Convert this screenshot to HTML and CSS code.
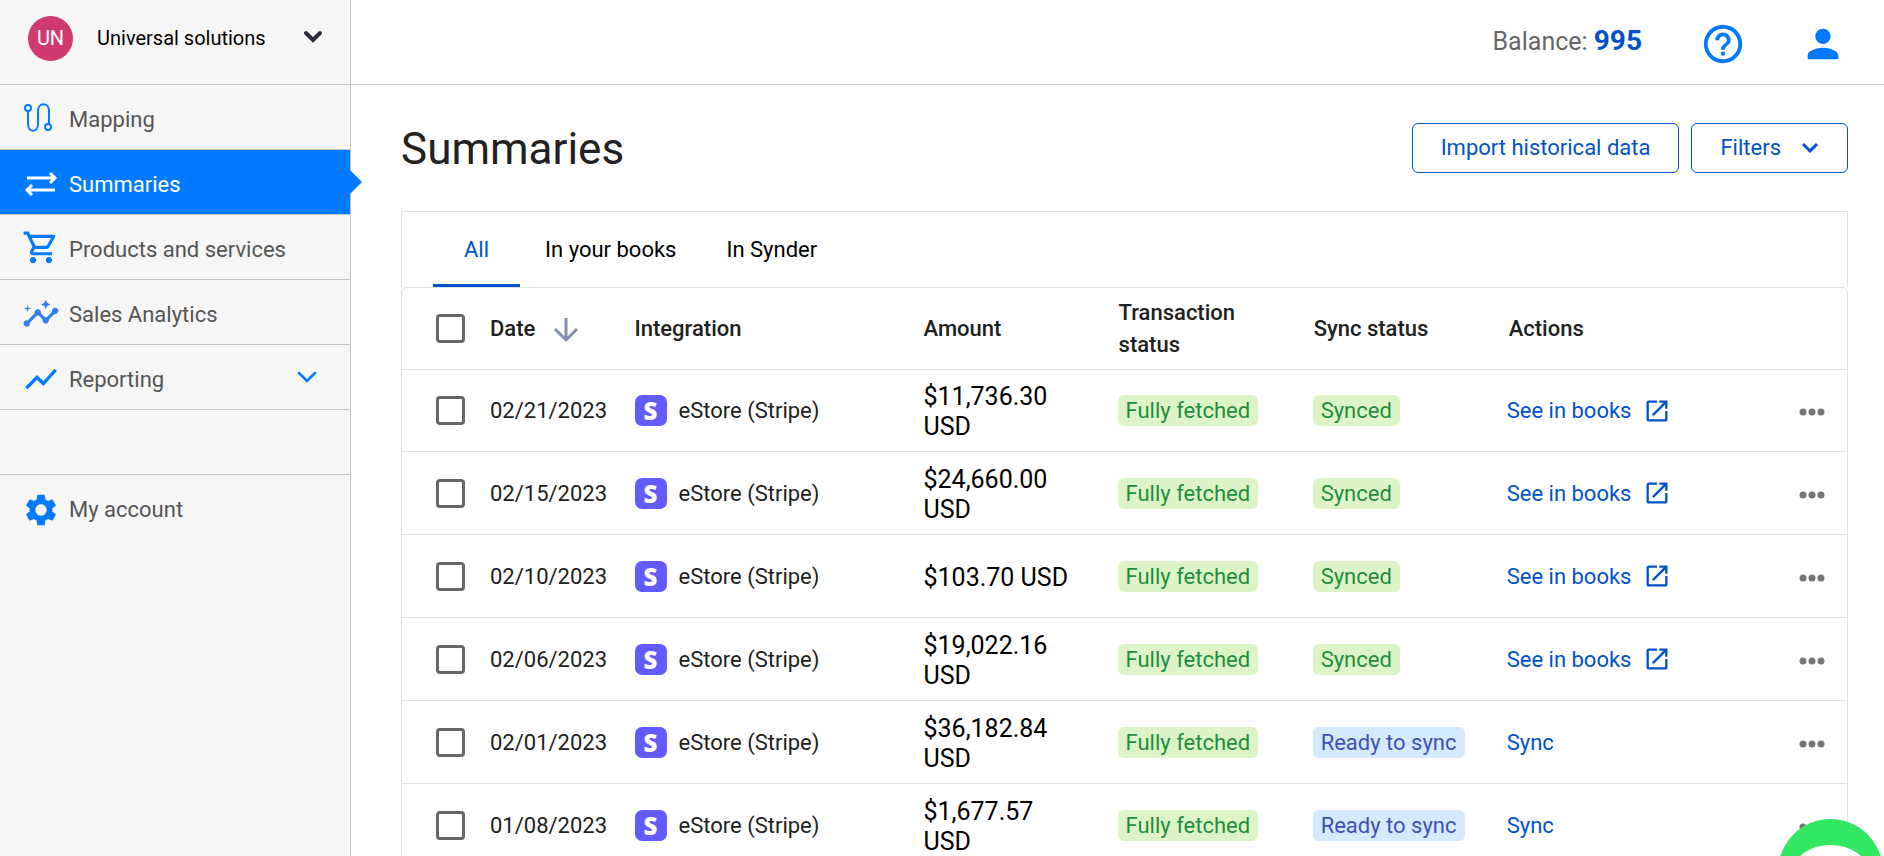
FILE: index.html
```html
<!DOCTYPE html>
<html lang="en">
<head>
    <meta charset="UTF-8">
    <meta name="viewport" content="width=device-width, initial-scale=1.0">
    <title>Summaries</title>
    <link rel="stylesheet" href="styles.css">
</head>
<body>

    <aside class="sidebar">
        <button class="company" type="button">
            <span class="avatar">UN</span>
            <span class="company-name">Universal solutions</span>
            <svg class="company-arrow" width="20" height="20" viewBox="0 0 20 20"><path d="M3 5l7 7 7-7" fill="none" stroke="#2b2b3a" stroke-width="4" stroke-linecap="round"/></svg>
        </button>
        <nav class="menu">
            <a href="#" class="menu-item">
                <svg width="38" height="38" viewBox="0 0 38 38" fill="none" stroke="#007bff" stroke-width="2"><circle cx="6" cy="8" r="3"/><circle cx="26" cy="27" r="3"/><path d="M6 11v13c0 9 10 9 10 0V11c0-9 11-9 11 0v13"/></svg>
                <span>Mapping</span>
            </a>
            <a href="#" class="menu-item active">
                <svg width="38" height="38" viewBox="0 0 38 38" fill="none" stroke="#fff" stroke-width="3"><path d="M5 13h27M28 8l5 5-5 5M33 25H6M10 20l-5 5 5 5"/></svg>
                <span>Summaries</span>
            </a>
            <a href="#" class="menu-item">
                <svg width="38" height="38" viewBox="0 1 24 24" fill="#007bff"><path d="M15.55 13c.75 0 1.41-.41 1.75-1.03l3.58-6.49c.37-.66-.11-1.48-.87-1.48H5.21l-.94-2H1v2h2l3.6 7.59-1.35 2.44C4.52 15.37 5.48 17 7 17h12v-2H7l1.1-2h7.45zM6.16 6h12.15l-2.76 5H8.53L6.16 6zM7 18c-1.1 0-1.99.9-1.99 2S5.9 22 7 22s2-.9 2-2-.9-2-2-2zm10 0c-1.1 0-1.99.9-1.99 2s.89 2 1.99 2 2-.9 2-2-.9-2-2-2z"/></svg>
                <span>Products and services</span>
            </a>
            <a href="#" class="menu-item">
                <svg width="38" height="38" viewBox="0 0 24 24" fill="#2f80ed"><path d="M21 8c-1.45 0-2.26 1.44-1.93 2.51l-3.55 3.56c-.3-.09-.74-.09-1.04 0l-2.55-2.55C12.27 10.45 11.46 9 10 9c-1.45 0-2.27 1.44-1.93 2.52l-4.56 4.55C2.44 15.74 1 16.55 1 18c0 1.1.9 2 2 2 1.45 0 2.26-1.44 1.93-2.51l4.55-4.56c.3.09.74.09 1.04 0l2.55 2.55C12.73 16.55 13.54 18 15 18c1.45 0 2.27-1.44 1.93-2.52l3.56-3.55C21.56 12.26 23 11.45 23 10c0-1.1-.9-2-2-2z"/><path d="M15 9l.94-2.07L18 6l-2.06-.93L15 3l-.92 2.07L12 6l2.08.93zM3.5 11l.5-2 2-.5-2-.5-.5-2-.5 2-2 .5 2 .5z"/></svg>
                <span>Sales Analytics</span>
            </a>
            <a href="#" class="menu-item">
                <svg width="38" height="38" viewBox="0 0 24 24" fill="#007bff"><path d="M3.5 18.49l6-6.01 4 4L22 6.92l-1.41-1.41-7.09 7.97-4-4L2 16.99z"/></svg>
                <span>Reporting</span>
                <svg class="menu-arrow" width="20" height="16" viewBox="0 0 20 16"><path d="M2 2l8 8 8-8" fill="none" stroke="#007bff" stroke-width="2.5" stroke-linecap="round"/></svg>
            </a>
            <div class="menu-space"></div>
            <a href="#" class="menu-item last">
                <svg width="38" height="38" viewBox="0 0 24 24" fill="#007bff"><path d="M19.14 12.94c.04-.3.06-.61.06-.94 0-.32-.02-.64-.07-.94l2.03-1.58c.18-.14.23-.41.12-.61l-1.92-3.32c-.12-.22-.37-.29-.59-.22l-2.39.96c-.5-.38-1.03-.7-1.62-.94l-.36-2.54c-.04-.24-.24-.41-.48-.41h-3.84c-.24 0-.43.17-.47.41l-.36 2.54c-.59.24-1.13.57-1.62.94l-2.39-.96c-.22-.08-.47 0-.59.22L2.74 8.87c-.12.21-.08.47.12.61l2.03 1.58c-.05.3-.09.63-.09.94s.02.64.07.94l-2.03 1.58c-.18.14-.23.41-.12.61l1.92 3.32c.12.22.37.29.59.22l2.39-.96c.5.38 1.03.7 1.62.94l.36 2.54c.05.24.24.41.48.41h3.84c.24 0 .44-.17.47-.41l.36-2.54c.59-.24 1.13-.56 1.62-.94l2.39.96c.22.08.47 0 .59-.22l1.92-3.32c.12-.22.07-.47-.12-.61l-2.01-1.58zM12 15.6c-1.98 0-3.6-1.62-3.6-3.6s1.62-3.6 3.6-3.6 3.6 1.62 3.6 3.6-1.62 3.6-3.6 3.6z"/></svg>
                <span>My account</span>
            </a>
        </nav>
    </aside>

    <div class="page">
        <header class="topbar">
            <div class="balance">Balance: <b>995</b></div>
            <button class="icon-btn" type="button" aria-label="Help">
                <svg width="46" height="46" viewBox="0 0 24 24" fill="#007bff"><path d="M11 18h2v-2h-2v2zm1-16C6.48 2 2 6.48 2 12s4.48 10 10 10 10-4.48 10-10S17.52 2 12 2zm0 18c-4.41 0-8-3.59-8-8s3.59-8 8-8 8 3.59 8 8-3.59 8-8 8zm0-14c-2.21 0-4 1.79-4 4h2c0-1.1.9-2 2-2s2 .9 2 2c0 2-3 1.75-3 5h2c0-2.25 3-2.5 3-5 0-2.21-1.79-4-4-4z"/></svg>
            </button>
            <button class="icon-btn" type="button" aria-label="Profile">
                <svg width="46" height="46" viewBox="0 0 24 24" fill="#007bff"><path d="M12 12c2.21 0 4-1.79 4-4s-1.79-4-4-4-4 1.79-4 4 1.79 4 4 4zm0 2c-2.67 0-8 1.34-8 4v2h16v-2c0-2.66-5.33-4-8-4z"/></svg>
            </button>
        </header>

        <main class="content">
            <div class="heading">
                <h1>Summaries</h1>
                <button class="btn" type="button">Import historical data</button>
                <button class="btn" type="button">Filters
                    <svg width="18" height="12" viewBox="0 0 18 12"><path d="M2 3l7 7 7-7" fill="none" stroke="#0052cc" stroke-width="3"/></svg>
                </button>
            </div>

            <div class="tabs">
                <button class="tab selected" type="button">All</button>
                <button class="tab" type="button">In your books</button>
                <button class="tab" type="button">In Synder</button>
            </div>

            <div class="table-box">
                <table>
                    <thead>
                        <tr>
                            <th class="col-check"><input type="checkbox" aria-label="Select all"></th>
                            <th class="col-date">Date <svg class="sort" width="26" height="26" viewBox="0 0 26 26"><path d="M13 1v22M2 12l11 11 11-11" fill="none" stroke="#8490ab" stroke-width="3"/></svg></th>
                            <th class="col-integration">Integration</th>
                            <th class="col-status">Amount</th>
                            <th class="col-status">Transaction status</th>
                            <th class="col-status">Sync status</th>
                            <th>Actions</th>
                            <th class="col-more"></th>
                        </tr>
                    </thead>
                    <tbody id="rows"></tbody>
                </table>
            </div>
        </main>
    </div>

    <button class="chat" type="button" aria-label="Chat"></button>

    <script>
        const summaries = [
            { date: '02/21/2023', amount: '$11,736.30', synced: true },
            { date: '02/15/2023', amount: '$24,660.00', synced: true },
            { date: '02/10/2023', amount: '$103.70', synced: true },
            { date: '02/06/2023', amount: '$19,022.16', synced: true },
            { date: '02/01/2023', amount: '$36,182.84', synced: false },
            { date: '01/08/2023', amount: '$1,677.57', synced: false }
        ];

        const openIcon = '<svg width="28" height="28" viewBox="0 0 24 24" fill="#0052cc"><path d="M19 19H5V5h7V3H5c-1.11 0-2 .9-2 2v14c0 1.1.89 2 2 2h14c1.1 0 2-.9 2-2v-7h-2v7zM14 3v2h3.59l-9.83 9.83 1.41 1.41L19 6.41V10h2V3h-7z"/></svg>';

        document.getElementById('rows').innerHTML = summaries.map(function(row) {
            const status = row.synced ? '<span class="tag green">Synced</span>' : '<span class="tag blue">Ready to sync</span>';
            const action = row.synced ? `<a href="#" class="action">See in books ${openIcon}</a>` : '<a href="#" class="action">Sync</a>';

            return `<tr>
                <td class="col-check"><input type="checkbox" aria-label="Select ${row.date}"></td>
                <td>${row.date}</td>
                <td><div class="integration"><span class="stripe">S</span>eStore (Stripe)</div></td>
                <td class="amount">${row.amount} USD</td>
                <td><span class="tag green">Fully fetched</span></td>
                <td>${status}</td>
                <td>${action}</td>
                <td class="col-more"><button class="more" type="button" aria-label="More"><svg width="26" height="8" viewBox="0 0 26 8" fill="#757575"><circle cx="4" cy="4" r="3.5"/><circle cx="13" cy="4" r="3.5"/><circle cx="22" cy="4" r="3.5"/></svg></button></td>
            </tr>`;
        }).join('');
    </script>

</body>
</html>
```
FILE: styles.css
```css
* {
    box-sizing: border-box;
}
body {
    margin: 0;
    display: flex;
    height: 100vh;
    overflow: hidden;
    font-family: Roboto, sans-serif;
    font-size: 22px;
    color: #212121;
    background-color: #fff;
}
button {
    font: inherit;
    padding: 0;
    border: none;
    background: none;
    cursor: pointer;
}
a {
    text-decoration: none;
}
svg {
    flex: none;
}
.sidebar {
    flex: none;
    width: 351px;
    background-color: #f6f6f6;
    border-right: 1px solid #c4c4c8;
}
.company {
    display: flex;
    align-items: center;
    width: 100%;
    height: 85px;
    padding: 0 27px 8px 28px;
    font-size: 20px;
    color: #000;
    border-bottom: 1px solid #c4c4c8;
}
.avatar {
    width: 45px;
    height: 45px;
    line-height: 45px;
    margin-right: 24px;
    border-radius: 50%;
    color: #fff;
    background-color: #d03a70;
}
.company-arrow {
    margin-left: auto;
}
.menu-item {
    position: relative;
    display: flex;
    align-items: center;
    height: 65px;
    padding: 4px 33px 0 22px;
    color: #555;
    border-bottom: 1px solid #c4c4c8;
}
.menu-item span {
    margin-left: 9px;
}
.menu-item.active {
    color: #fff;
    background-color: #007bff;
}
.menu-item.active::after {
    content: "";
    position: absolute;
    left: 100%;
    top: 20px;
    border: 12px solid transparent;
    border-left-color: #007bff;
    border-right: none;
}
.menu-item.last {
    border-bottom: none;
}
.menu-arrow {
    margin-left: auto;
}
.menu-space {
    height: 65px;
    border-bottom: 1px solid #c4c4c8;
}
.page {
    flex: 1;
    min-width: 0;
}
.topbar {
    display: flex;
    justify-content: flex-end;
    align-items: center;
    height: 85px;
    padding: 4px 38px 0 0;
    border-bottom: 1px solid #c4c4c8;
}
.balance {
    padding-bottom: 8px;
    font-size: 25px;
    color: #666;
}
.balance b {
    font-size: 28px;
    color: #0052cc;
}
.icon-btn {
    display: flex;
    margin-left: 54px;
}
.balance + .icon-btn {
    margin-left: 58px;
}
.content {
    padding: 0 36px 0 50px;
}
.heading {
    display: flex;
    align-items: center;
    gap: 12px;
    height: 126px;
}
h1 {
    flex: 1;
    margin: 0;
    padding-top: 2px;
    font-size: 44px;
    font-weight: 400;
}
.btn {
    display: flex;
    align-items: center;
    gap: 20px;
    height: 50px;
    padding: 0 28px 2px;
    color: #0052cc;
    border: 1px solid #0052cc;
    border-radius: 6px;
}
.tabs {
    display: flex;
    height: 76px;
    padding-left: 31px;
    border: 1px solid #dfe1e8;
    border-bottom: none;
}
.tab {
    padding: 0 25px;
    color: #000;
}
.tab.selected {
    padding: 3px 31px 0;
    color: #0052cc;
    border-bottom: 3px solid #0052cc;
}
.table-box {
    border: 1px solid #dfe1e8;
    border-radius: 6px;
}
table {
    width: 100%;
    table-layout: fixed;
    border-collapse: separate;
    border-spacing: 0;
}
th, td {
    height: 83px;
    padding: 0 16px;
    text-align: left;
    border-bottom: 1px solid #dfe1e8;
}
th {
    height: 82px;
    line-height: 32px;
    font-weight: 500;
}
tbody tr:first-child td {
    height: 82px;
}
.col-check {
    width: 72px;
    padding: 0 0 0 34px;
}
.col-date {
    width: 10%;
    white-space: nowrap;
}
.col-integration {
    width: 20%;
}
.col-status {
    width: 13.5%;
}
.col-more {
    width: 80px;
    padding-right: 22px;
    text-align: right;
}
.sort {
    margin-left: 12px;
    vertical-align: middle;
}
input {
    appearance: none;
    display: block;
    width: 29px;
    height: 29px;
    margin: 0;
    border: 3px solid #666;
    border-radius: 4px;
    background-color: #fff;
}
.integration {
    display: flex;
    align-items: center;
    gap: 12px;
}
.stripe {
    width: 32px;
    height: 31px;
    line-height: 31px;
    border-radius: 7px;
    font-family: "Open Sans", sans-serif;
    font-size: 24px;
    font-weight: 800;
    text-align: center;
    color: #fff;
    background-color: #635bff;
}
.amount {
    padding-top: 3px;
    font-size: 25px;
    line-height: 30px;
    color: #000;
}
.tag {
    display: inline-block;
    height: 31px;
    line-height: 31px;
    margin-left: -1px;
    padding: 0 8px;
    border-radius: 6px;
    white-space: nowrap;
}
.tag.green {
    color: #1e8e3e;
    background-color: #ddf5c6;
}
.tag.blue {
    color: #3f51b5;
    background-color: #d6eaff;
}
.action {
    display: flex;
    align-items: center;
    gap: 12px;
    margin-left: -2px;
    color: #0052cc;
}
.more {
    display: inline-flex;
    vertical-align: middle;
}
.chat {
    position: fixed;
    right: 1px;
    bottom: -68px;
    width: 105px;
    height: 105px;
    border: 26px solid #32e860;
    border-left-width: 15px;
    border-right-width: 15px;
    border-radius: 50%;
    background-color: #fff;
}
```
